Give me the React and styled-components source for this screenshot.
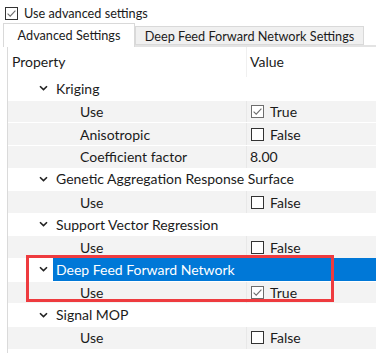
import styled, { createGlobalStyle } from "styled-components";

const GlobalStyle = createGlobalStyle`
  html, body {
    margin: 0;
    padding: 0;
    background: #ffffff;
  }
  body {
    font-family: "Lato", "Noto Sans", sans-serif;
    font-size: 14px;
    color: #1b1b1b;
    width: 376px;
    height: 353px;
    overflow: hidden;
  }
`;

const Page = styled.div`
  width: 376px;
  height: 353px;
  overflow: hidden;
  display: flex;
  flex-direction: column;
`;

const TopCheck = styled.label`
  display: flex;
  align-items: center;
  gap: 6px;
  height: 23px;
  padding-left: 5px;
  padding-top: 3px;
  box-sizing: border-box;
  font-size: 12.7px;
`;

const TabBar = styled.div`
  display: flex;
  align-items: flex-end;
  height: 22px;
  padding-left: 3px;
  font-size: 12.7px;
`;

const Tab = styled.div`
  box-sizing: border-box;
  display: flex;
  align-items: center;
  justify-content: center;
  white-space: nowrap;
  width: ${(p) => p.$width}px;
  height: ${(p) => (p.$active ? 24 : 19)}px;
  margin-bottom: ${(p) => (p.$active ? -2 : 0)}px;
  padding-bottom: ${(p) => (p.$active ? 2 : 0)}px;
  background: ${(p) => (p.$active ? "#ffffff" : "#f0f0f0")};
  border: 1px solid #d9d9d9;
  border-bottom: ${(p) => (p.$active ? "none" : "1px solid #d9d9d9")};
  position: relative;
  z-index: ${(p) => (p.$active ? 1 : 0)};
`;

const Panel = styled.div`
  margin-left: 7px;
  border-top: 2px solid #e3e3e3;
  border-left: 1px solid #dadada;
  flex: 1;
  display: flex;
  flex-direction: column;
`;

const Grid = styled.div`
  display: grid;
  grid-template-columns: 238px 1px 1fr;
  align-items: stretch;
`;

const HeaderRow = styled(Grid)`
  height: 30px;
`;

const HeaderCell = styled.div`
  display: flex;
  align-items: center;
  padding-left: ${(p) => p.$pad}px;
  padding-bottom: 1px;
`;

const Divider = styled.div`
  background: ${(p) => p.$color || "#e8e8e8"};
`;

const Row = styled(Grid)`
  height: 22.65px;
  box-sizing: border-box;
  background: #f3f3f3;
  border-top: 1px solid #ffffff;
`;

const CategoryRow = styled.div`
  display: flex;
  align-items: stretch;
  height: 22.65px;
  background: #ffffff;
`;

const Chevron = styled.div`
  width: 45px;
  display: flex;
  align-items: center;
  justify-content: flex-end;
  padding-right: 5px;
  box-sizing: border-box;
`;

const CategoryLabel = styled.div`
  flex: 1;
  display: flex;
  align-items: center;
  padding-left: 3px;
  white-space: nowrap;
  background: ${(p) => (p.$selected ? "#0078d7" : "transparent")};
  color: ${(p) => (p.$selected ? "#ffffff" : "inherit")};
`;

const NameCell = styled.div`
  display: flex;
  align-items: center;
  padding-left: 72px;
  white-space: nowrap;
`;

const ValueCell = styled.div`
  display: flex;
  align-items: center;
  gap: 6px;
  padding-left: ${(p) => (p.$text ? 3 : 4)}px;
`;

const Group = styled.div`
  position: relative;
`;

const Highlight = styled.div`
  position: absolute;
  left: 18px;
  top: -3px;
  width: 308px;
  height: 47px;
  border: 3px solid #ee3b3f;
  box-sizing: border-box;
  pointer-events: none;
`;

const Box = ({ checked, dark }) => (
  <svg width="13" height="13" viewBox="0 0 13 13">
    <rect
      x="0.5"
      y="0.5"
      width="12"
      height="12"
      fill="#ffffff"
      stroke={checked && !dark ? "#6d6d6d" : "#333333"}
    />
    {checked && (
      <path
        d="M2.6 6.6 L5.2 9.1 L10.4 3.6"
        fill="none"
        stroke="#6d6d6d"
        strokeWidth="1.1"
      />
    )}
  </svg>
);

const ChevronIcon = () => (
  <svg width="9" height="6" viewBox="0 0 9 6">
    <path d="M1 1.2 L4.5 4.6 L8 1.2" fill="none" stroke="#222" strokeWidth="1.6" />
  </svg>
);

const data = [
  {
    name: "Kriging",
    items: [
      { name: "Use", check: true },
      { name: "Anisotropic", check: false },
      { name: "Coefficient factor", text: "8.00" },
    ],
  },
  {
    name: "Genetic Aggregation Response Surface",
    items: [{ name: "Use", check: false }],
  },
  {
    name: "Support Vector Regression",
    items: [{ name: "Use", check: false }],
  },
  {
    name: "Deep Feed Forward Network",
    selected: true,
    items: [{ name: "Use", check: true }],
  },
  {
    name: "Signal MOP",
    items: [{ name: "Use", check: false }],
  },
];

const App = () => {
  return (
    <Page>
      <GlobalStyle />
      <TopCheck>
        <Box checked dark />
        <span>Use advanced settings</span>
      </TopCheck>
      <TabBar>
        <Tab $active $width={132}>Advanced Settings</Tab>
        <Tab $width={229}>Deep Feed Forward Network Settings</Tab>
      </TabBar>
      <Panel>
        <HeaderRow>
          <HeaderCell $pad={4}>Property</HeaderCell>
          <Divider $color="#f0f0f0" />
          <HeaderCell $pad={3}>Value</HeaderCell>
        </HeaderRow>
        {data.map((cat) => (
          <Group key={cat.name}>
            <CategoryRow>
              <Chevron>
                <ChevronIcon />
              </Chevron>
              <CategoryLabel $selected={cat.selected}>{cat.name}</CategoryLabel>
            </CategoryRow>
            {cat.items.map((it) => (
              <Row key={it.name}>
                <NameCell>{it.name}</NameCell>
                <Divider />
                {it.text ? (
                  <ValueCell $text>{it.text}</ValueCell>
                ) : (
                  <ValueCell>
                    <Box checked={it.check} />
                    <span>{it.check ? "True" : "False"}</span>
                  </ValueCell>
                )}
              </Row>
            ))}
            {cat.selected && <Highlight />}
          </Group>
        ))}
      </Panel>
    </Page>
  );
};

export default App;
